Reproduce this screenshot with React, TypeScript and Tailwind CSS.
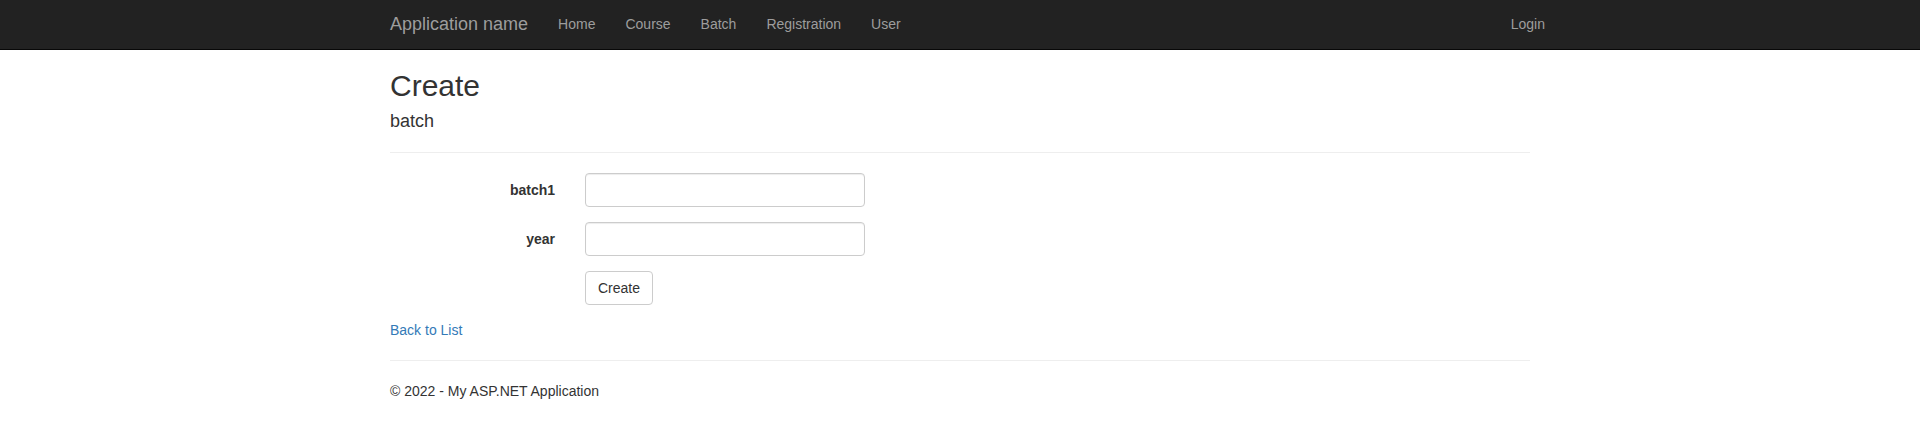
import React from "react"

const navLinks = ["Home", "Course", "Batch", "Registration", "User"]

function Field({ label }: { label: string }) {
  return (
    <div className="flex mx-[-15px] mb-[15px]">
      <label className="w-[195px] px-[15px] pt-[7px] text-right font-bold leading-[20px]">{label}</label>
      <div className="px-[15px]">
        <input
          type="text"
          className="block w-[280px] h-[34px] px-3 py-[6px] bg-white border border-[#ccc] rounded-[4px] text-[14px] text-[#555] shadow-[inset_0_1px_1px_rgba(0,0,0,0.075)] outline-none"
        />
      </div>
    </div>
  )
}

export default function App() {
  return (
    <div className="min-h-[433px] bg-white text-[#333] text-[14px] leading-[20px] font-['Liberation_Sans',Arial,sans-serif]">
      <nav className="h-[50px] bg-[#222] border-b border-[#080808]">
        <div className="w-[1170px] mx-auto flex items-start">
          <a className="px-[15px] pt-[14px] pb-[16px] text-[18px] leading-[20px] text-[#9d9d9d]">Application name</a>
          <ul className="flex">
            {navLinks.map((l) => (
              <li key={l}>
                <a className="block px-[15px] pt-[14px] pb-[16px] leading-[20px] text-[#9d9d9d]">{l}</a>
              </li>
            ))}
          </ul>
          <a className="ml-auto pl-[15px] pt-[14px] pb-[16px] leading-[20px] text-[#9d9d9d]">Login</a>
        </div>
      </nav>

      <main className="w-[1170px] mx-auto px-[15px] pb-[20px]">
        <h2 className="mt-[19px] text-[30px] leading-[33px] font-normal">Create</h2>
        <h4 className="mt-[10px] text-[18px] leading-[19.8px] font-normal">batch</h4>
        <hr className="mt-[20px] mb-[20px] border-0 border-t border-[#eee]" />

        <form>
          <Field label="batch1" />
          <Field label="year" />
          <div className="flex mx-[-15px] mb-[15px]">
            <div className="w-[195px]" />
            <div className="px-[15px]">
              <button
                type="button"
                className="h-[34px] px-3 py-[6px] bg-white border border-[#ccc] rounded-[4px] text-[14px] leading-[20px] text-[#333]"
              >
                Create
              </button>
            </div>
          </div>
        </form>

        <div>
          <a className="text-[#337ab7]">Back to List</a>
        </div>

        <hr className="mt-[20px] mb-[20px] border-0 border-t border-[#eee]" />
        <footer>
          <p className="mb-[10px]">© 2022 - My ASP.NET Application</p>
        </footer>
      </main>
    </div>
  )
}
